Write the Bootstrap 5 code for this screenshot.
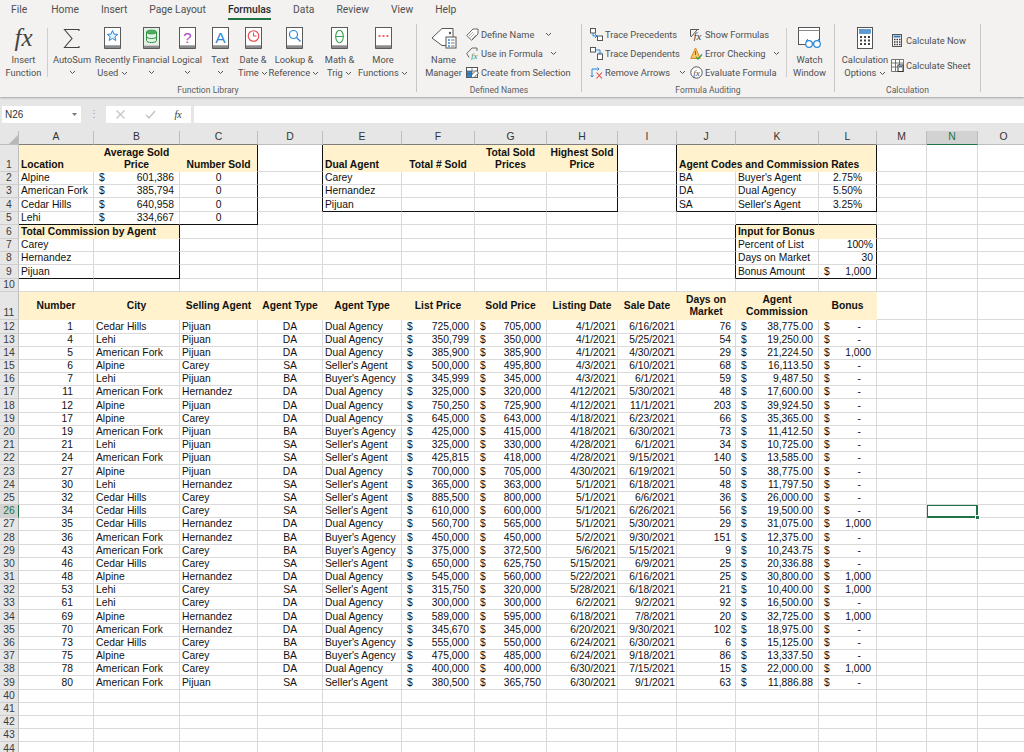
<!DOCTYPE html>
<html lang="en">
<head>
<meta charset="utf-8">
<title>Real Estate Workbook</title>
<link href="https://cdn.jsdelivr.net/npm/bootstrap@5.3.0/dist/css/bootstrap.min.css" rel="stylesheet">
<style>
html,body{margin:0;height:752px;overflow:hidden;background:#fff}
.rb{background:#f3f2f1;height:97px;font-family:Roboto,"Liberation Sans",sans-serif;color:#505050;box-shadow:0 1px 2px rgba(0,0,0,.28);position:relative;z-index:2}
.rb-tabs{height:20px;padding-left:11px;gap:22px;font-size:10.3px;line-height:20px}
.rb-tab{height:19px}
.rb-tab:first-child{margin-right:2px}
.rb-on{font-weight:500;color:#2a2a2a;border-bottom:2px solid #217346;height:19.5px}
.rb-body{height:77px}
.rb-grp{margin-top:4px;height:68px;border-right:1px solid #c9c7c5;flex:none}
.g-fn{width:417px}.g-dn{width:165px}.g-fa{width:253px}.g-ca{width:146px}
.rb-items{height:60px}
.rb-cap{height:12px;line-height:12px;font-size:8.6px;text-align:center;color:#5c5c5c}
.rb-btn{font-size:9.3px;line-height:13px;text-align:center;flex:none;display:flex;flex-direction:column;align-items:center;white-space:nowrap}
.rb-ic{height:22px;margin-top:3px;margin-bottom:3.5px;display:block;flex:none}
.rb-fx{font-family:"Liberation Serif",serif;font-style:italic;font-size:25px;line-height:22px;color:#444;padding:0 3px}
.rb-sep{width:1px;height:49px;margin-top:4px;background:#d0cecc;flex:none}
.b47{width:47px}.b44{width:44px;margin-left:2px}.b37{width:37px}.b40{width:40px}.b32{width:32px}.b34{width:34px}.b50{width:50px}.b41{width:41px}.b46{width:46px}
.b49{width:49px;margin-left:2px}.b45{width:45px}.b58{width:58px;margin-left:1px}
.rb-col{flex:none;padding-top:.5px;font-size:9.3px;white-space:nowrap}
.rb-row{height:19px;line-height:19px;display:flex;align-items:center;gap:2px}
.rb-row svg.si{flex:none}
.col-dn{margin-left:-2px}.col-a{margin-left:8px;width:100px}.col-b{width:96px}.col-c{margin-left:-3px;padding-top:6.5px}
.col-c .rb-row{margin-bottom:6px}
.chev{flex:none}
.ch-dn1{margin-left:9px}.ch-dn2{margin-left:5px}.ch-ra{margin-left:7px}.ch-ec{margin-left:5px}
.fbar{height:34px;background:#e6e6e6;padding-top:9px;font-family:"Liberation Sans",sans-serif}
.fb-box{background:#fff;height:17px;font-size:10px;line-height:17px;color:#333}
.fb-name{width:79px;margin-left:2px;padding-left:3px}
.fb-dots{width:25px;text-align:center;font-size:10px;line-height:16px;color:#9a9a9a;flex:none}
.fb-fx{width:85px;gap:0}
.fb-in{margin-left:3px;flex:1}
.fxi{font-family:"Liberation Serif",serif;font-style:italic}
.sheet-wrap{overflow:hidden;height:621px;position:relative}
.sheet{table-layout:fixed;width:1030px;border-collapse:separate;border-spacing:0;font-family:"Liberation Sans",Arial,sans-serif;font-size:10.3px;line-height:12px;color:#111}
.sheet th,.sheet td{padding:0 2px;border-right:1px solid #dadada;border-bottom:1px solid #dadada;vertical-align:bottom;white-space:nowrap;font-weight:400}
.sheet tr{height:13.2px}
.sheet .tops tr{height:13.42px}
.sheet thead th{background:#e6e6e6;height:13.5px;text-align:center;border-right-color:#bdbdbd;border-bottom-color:#bdbdbd;color:#333;font-size:10.4px;vertical-align:middle}
.sheet thead th.et{border-bottom-color:#7d7d7d}
.sheet tbody th{background:#e6e6e6;text-align:center;color:#3c3c3c;border-right-color:#bdbdbd;border-bottom-color:#cfcfcf;padding:0;font-size:10.4px}
.sheet thead th.hs{background:#d2d2d2;color:#217346;border-bottom:1px solid #217346}
.sheet tbody th.hs{background:#d2d2d2;color:#217346;border-right:1.5px solid #217346}
.sheet .tops .rh1{height:27px}.sheet .tops .rh11{height:28.2px}
.hd{background:#fff2cc;font-weight:700!important;border-right-color:#fff2cc!important;border-bottom-color:#fff2cc!important}
.hm{vertical-align:middle!important;text-align:center}
.cc{text-align:center}.re{text-align:right;padding-right:3px!important}
.mny{text-align:right;padding:0 5px!important}
.mny span{float:left}
.sheet td.er{border-right-color:#111!important}
.sheet td.eb{border-bottom-color:#111!important}
.data td:nth-child(2){text-align:right;padding-right:20px}
.data td:nth-child(5){text-align:center}
.data td:nth-child(7),.data td:nth-child(8),.data td:nth-child(12),.data td:nth-child(13){text-align:right;padding:0 5px}
.data td:nth-child(7) span,.data td:nth-child(8) span,.data td:nth-child(12) span,.data td:nth-child(13) span{float:left}
.data td:nth-child(9),.data td:nth-child(10){text-align:right;padding-right:1px}
.data td:nth-child(11){text-align:right;padding-right:4px}
.data td.dsh{padding-right:15px}
.note{position:relative}
.note-dot{position:absolute;right:6px;top:1px;width:2px;height:2px;background:#d11}
.sel{position:relative;box-shadow:inset 0 0 0 1px #217346;border-color:#217346!important}
.sel-h{position:absolute;right:-3px;bottom:-3px;width:5px;height:5px;background:#217346;border:1px solid #fff}
.sheet-corner{position:absolute;left:9px;top:4px}
</style>
</head>
<body>
<svg width="0" height="0" class="position-absolute">
<symbol id="book" viewBox="0 0 17 22"><rect x=".5" y=".5" width="16" height="18.5" fill="#fff" stroke="#5a5a5a"/><path d="M.5 19v2.5h16V19" fill="#8a8a8a" stroke="#5a5a5a"/></symbol>
</svg>
<div class="rb">
<div class="d-flex rb-tabs">
<div class="rb-tab">File</div><div class="rb-tab">Home</div><div class="rb-tab">Insert</div><div class="rb-tab">Page Layout</div><div class="rb-tab rb-on">Formulas</div><div class="rb-tab">Data</div><div class="rb-tab">Review</div><div class="rb-tab">View</div><div class="rb-tab">Help</div>
</div>
<div class="d-flex rb-body">

<div class="rb-grp g-fn">
<div class="d-flex rb-items">
<div class="rb-btn b47"><span class="rb-ic rb-fx">fx</span>Insert<br>Function</div>
<div class="rb-sep"></div>
<div class="rb-btn b44"><svg class="rb-ic" width="18" height="22" viewBox="0 0 18 22"><path d="M16 4V2.5H1.5L9 11.5 1.5 20.5H16V19" fill="none" stroke="#444" stroke-width="1.1"/></svg>AutoSum<svg class="chev mt-1" width="7" height="5" viewBox="0 0 7 5"><path d="M1 1l2.5 2.5L6 1" fill="none" stroke="#555"/></svg></div>
<div class="rb-btn b37"><svg class="rb-ic" width="17" height="22"><use href="#book"/><path d="M8.5 3.5l1.5 3.6 3.8.3-2.9 2.4.9 3.7-3.3-2-3.3 2 .9-3.7-2.9-2.4 3.8-.3z" fill="#e5f1fb" stroke="#2b88d8"/></svg><span>Recently<br>Used <svg class="chev" width="7" height="5" viewBox="0 0 7 5"><path d="M1 1l2.5 2.5L6 1" fill="none" stroke="#555"/></svg></span></div>
<div class="rb-btn b40"><svg class="rb-ic" width="17" height="22"><use href="#book"/><path d="M1 1h15v17.500H1z" fill="#e3f1e5"/><ellipse cx="8.500" cy="5" rx="5" ry="2" fill="#4fae62" stroke="#2f8f45" stroke-width=".7"/><path d="M3.500 5v8.500c0 2.700 10 2.700 10 0V5M3.500 9.500c0 2.700 10 2.700 10 0" fill="none" stroke="#2f8f45"/></svg>Financial<svg class="chev mt-1" width="7" height="5" viewBox="0 0 7 5"><path d="M1 1l2.5 2.5L6 1" fill="none" stroke="#555"/></svg></div>
<div class="rb-btn b32"><svg class="rb-ic" width="17" height="22"><use href="#book"/><text x="8.500" y="15.500" text-anchor="middle" font-family="Liberation Sans" font-size="15" fill="#b146c2">?</text></svg>Logical<svg class="chev mt-1" width="7" height="5" viewBox="0 0 7 5"><path d="M1 1l2.500 2.500L6 1" fill="none" stroke="#555"/></svg></div>
<div class="rb-btn b34"><svg class="rb-ic" width="17" height="22"><use href="#book"/><text x="8.500" y="15.500" text-anchor="middle" font-family="Liberation Sans" font-size="15.500" fill="#2b88d8">A</text></svg>Text<svg class="chev mt-1" width="7" height="5" viewBox="0 0 7 5"><path d="M1 1l2.500 2.500L6 1" fill="none" stroke="#555"/></svg></div>
<div class="rb-btn b32"><svg class="rb-ic" width="17" height="22"><use href="#book"/><circle cx="8.500" cy="9" r="5.300" fill="#fff" stroke="#e8464a" stroke-width="1.100"/><path d="M8.500 5.500V9H11.500" fill="none" stroke="#e8464a"/></svg><span>Date &amp;<br>Time <svg class="chev" width="7" height="5" viewBox="0 0 7 5"><path d="M1 1l2.500 2.500L6 1" fill="none" stroke="#555"/></svg></span></div>
<div class="rb-btn b50"><svg class="rb-ic" width="17" height="22"><use href="#book"/><circle cx="7.500" cy="7.500" r="4" fill="none" stroke="#2b88d8" stroke-width="1.200"/><path d="M10.500 10.500l4 4" stroke="#2b88d8" stroke-width="1.300"/></svg><span>Lookup &amp;<br>Reference <svg class="chev" width="7" height="5" viewBox="0 0 7 5"><path d="M1 1l2.500 2.500L6 1" fill="none" stroke="#555"/></svg></span></div>
<div class="rb-btn b41"><svg class="rb-ic" width="17" height="22"><use href="#book"/><ellipse cx="8.500" cy="9.500" rx="3.800" ry="6.200" fill="none" stroke="#38a34f" stroke-width="1.100"/><path d="M4.700 9.500h7.600" stroke="#38a34f"/></svg><span>Math &amp;<br>Trig <svg class="chev" width="7" height="5" viewBox="0 0 7 5"><path d="M1 1l2.500 2.500L6 1" fill="none" stroke="#555"/></svg></span></div>
<div class="rb-btn b46"><svg class="rb-ic" width="17" height="22"><use href="#book"/><path d="M3.500 9h2M7.500 9h2M11.500 9h2" stroke="#e8363a" stroke-width="1.500"/></svg><span>More<br>Functions <svg class="chev" width="7" height="5" viewBox="0 0 7 5"><path d="M1 1l2.500 2.500L6 1" fill="none" stroke="#555"/></svg></span></div>
</div>
<div class="rb-cap">Function Library</div>
</div>

<div class="rb-grp g-dn">
<div class="d-flex rb-items">
<div class="rb-btn b49"><svg class="rb-ic" width="26" height="22" viewBox="0 0 26 22"><path d="M1 11L11 1.500h11v17H11z" fill="#fff" stroke="#555"/><circle cx="19" cy="6" r="1.200" fill="#555"/><rect x="15" y="10" width="10" height="11" fill="#fff" stroke="#555"/><path d="M17 13h2M17 16h2M17 19h2" stroke="#2b88d8" stroke-width="1.500"/><path d="M20 13h3.500M20 16h3.500M20 19h3.500" stroke="#777"/></svg>Name<br>Manager</div>
<div class="rb-col col-dn">
<div class="rb-row"><svg class="si" width="13" height="13" viewBox="0 0 13 13"><path d="M.7 7.500L7 1h5v5l-6.300 6.300z" fill="#fff" stroke="#666"/><path d="M3 8l4-4M4.500 9.500l4-4M6 11l4-4" stroke="#999" stroke-width=".8"/></svg>Define Name<svg class="chev ch-dn1" width="7" height="5" viewBox="0 0 7 5"><path d="M1 1l2.500 2.500L6 1" fill="none" stroke="#555"/></svg></div>
<div class="rb-row"><svg class="si" width="13" height="13" viewBox="0 0 13 13"><path d="M.7 6.500L6 1h5v3M3 10.500L.7 6.500" fill="none" stroke="#666"/><text x="5" y="12" font-family="Liberation Serif" font-style="italic" font-size="9" fill="#3b8f4e">fx</text></svg>Use in Formula<svg class="chev ch-dn2" width="7" height="5" viewBox="0 0 7 5"><path d="M1 1l2.500 2.500L6 1" fill="none" stroke="#555"/></svg></div>
<div class="rb-row"><svg class="si" width="13" height="13" viewBox="0 0 13 13"><rect x=".5" y="1.500" width="11" height="10" fill="#fff" stroke="#555"/><path d="M1 5h5v6H1z" fill="#2b88d8"/><path d="M.5 5h11M.5 8h11M6 1.500v10" stroke="#555" stroke-width=".7"/><path d="M5.500 9L10 4.500l2.500 2.500L8 11.500H5.500z" fill="#fff" stroke="#666"/></svg>Create from Selection</div>
</div>
</div>
<div class="rb-cap">Defined Names</div>
</div>

<div class="rb-grp g-fa">
<div class="d-flex rb-items">
<div class="rb-col col-a">
<div class="rb-row"><svg class="si" width="13" height="13" viewBox="0 0 13 13"><rect x=".5" y=".5" width="5" height="4.500" fill="#fff" stroke="#555"/><rect x="7.500" y="8" width="5" height="4.500" fill="#fff" stroke="#555"/><path d="M3 5v3h3.500M5 6l2 2-2 2" fill="none" stroke="#2b88d8"/></svg>Trace Precedents</div>
<div class="rb-row"><svg class="si" width="13" height="13" viewBox="0 0 13 13"><rect x=".5" y=".5" width="5" height="4.500" fill="#fff" stroke="#555"/><rect x="7.500" y="7" width="5" height="5.500" fill="#fff" stroke="#555"/><path d="M5.500 3H10v4M8.500 5.500L10 7l1.500-1.500" fill="none" stroke="#2b88d8"/></svg>Trace Dependents</div>
<div class="rb-row"><svg class="si" width="13" height="13" viewBox="0 0 13 13"><path d="M2 11V3h7M7.500 1.500L9 3 7.500 4.500M.5 9.500L2 11l1.500-1.500" fill="none" stroke="#2b88d8"/><path d="M6.500 6.500l5.500 6M12 6.500l-5.500 6" stroke="#e8464a" stroke-width="1.100"/></svg>Remove Arrows<svg class="chev ch-ra" width="7" height="5" viewBox="0 0 7 5"><path d="M1 1l2.500 2.500L6 1" fill="none" stroke="#555"/></svg></div>
</div>
<div class="rb-col col-b">
<div class="rb-row"><svg class="si" width="13" height="13" viewBox="0 0 13 13"><path d="M.5 1.500h8.500M.5 1.500v7M1 9l6-7" fill="none" stroke="#555"/><text x="3.500" y="12" font-family="Liberation Serif" font-style="italic" font-size="11" fill="#444">fx</text></svg>Show Formulas</div>
<div class="rb-row"><svg class="si" width="13" height="13" viewBox="0 0 13 13"><path d="M5.500 1L.7 11.500h9.600z" fill="#f6c667" stroke="#e08a1e"/><path d="M5.500 4v4" stroke="#c24e1a"/><path d="M6 10l2 2 4-4.500" fill="none" stroke="#38a34f" stroke-width="1.300"/></svg>Error Checking<svg class="chev ch-ec" width="7" height="5" viewBox="0 0 7 5"><path d="M1 1l2.500 2.500L6 1" fill="none" stroke="#555"/></svg></div>
<div class="rb-row"><svg class="si" width="13" height="13" viewBox="0 0 13 13"><circle cx="6.500" cy="6.500" r="5.700" fill="#fff" stroke="#555"/><text x="3.200" y="9.500" font-family="Liberation Serif" font-style="italic" font-size="9" fill="#444">fx</text></svg>Evaluate Formula</div>
</div>
<div class="rb-sep"></div>
<div class="rb-btn b45"><svg class="rb-ic" width="24" height="22" viewBox="0 0 24 22"><rect x=".5" y=".5" width="21" height="17" fill="#fff" stroke="#555"/><path d="M.5 3.500h21" stroke="#888"/><circle cx="11" cy="17" r="3.300" fill="#fff" stroke="#2b88d8" stroke-width="1.200"/><circle cx="19" cy="17" r="3.300" fill="#fff" stroke="#2b88d8" stroke-width="1.200"/><path d="M14 16h2M8 14l2-2M22 14l-2-2" stroke="#2b88d8"/></svg>Watch<br>Window</div>
</div>
<div class="rb-cap">Formula Auditing</div>
</div>

<div class="rb-grp g-ca">
<div class="d-flex rb-items">
<div class="rb-btn b58"><svg class="rb-ic" width="16" height="22" viewBox="0 0 16 22"><rect x=".5" y=".5" width="15" height="21" fill="#fff" stroke="#555"/><rect x="2.500" y="2.500" width="11" height="4" fill="#5b9bd5" stroke="#3a7ab5" stroke-width=".6"/><path d="M3 10h2M7 10h2M11 10h2M3 13.500h2M7 13.500h2M11 13.500h2M3 17h2M7 17h2M11 17h2" stroke="#444" stroke-width="2"/></svg><span>Calculation<br>Options <svg class="chev" width="7" height="5" viewBox="0 0 7 5"><path d="M1 1l2.500 2.500L6 1" fill="none" stroke="#555"/></svg></span></div>
<div class="rb-col col-c">
<div class="rb-row"><svg class="si" width="13" height="13" viewBox="0 0 13 13"><rect x="1.500" y=".5" width="9" height="12" fill="#fff" stroke="#555"/><rect x="2.500" y="1.500" width="7" height="2" fill="#3a7ab5"/><path d="M3 5.500h1.500M5.500 5.500H7M8 5.500h1.500M3 8h1.500M5.500 8H7M8 8h1.500M3 10.500h1.500M5.500 10.500H7M8 10.500h1.500" stroke="#333" stroke-width="1.300"/></svg>Calculate Now</div>
<div class="rb-row"><svg class="si" width="13" height="13" viewBox="0 0 13 13"><path d="M.5.500h12v12H.5zM.5 4h12M.5 8h12M4.500.5v12M8.500.5v12" fill="#fff" stroke="#666" stroke-width=".9"/><rect x="7" y="6" width="5" height="6.500" fill="#fff" stroke="#333"/><rect x="8" y="7" width="3" height="1.500" fill="#3a7ab5"/></svg>Calculate Sheet</div>
</div>
</div>
<div class="rb-cap">Calculation</div>
</div>

</div>
</div>

<div class="fbar d-flex">
<div class="fb-box fb-name d-flex justify-content-between align-items-center"><span>N26</span><svg class="me-1" width="5" height="3" viewBox="0 0 5 3"><path d="M0 0h5L2.500 3z" fill="#777"/></svg></div>
<div class="fb-dots">⋮</div>
<div class="fb-box fb-fx d-flex align-items-center justify-content-around">
<svg width="11" height="11" viewBox="0 0 11 11"><path d="M1.500 1.500l8 8M9.500 1.500l-8 8" stroke="#c4c4c4" stroke-width="1.200"/></svg>
<svg width="11" height="11" viewBox="0 0 11 11"><path d="M1 6l3 3 6-7" fill="none" stroke="#c4c4c4" stroke-width="1.500"/></svg>
<span class="fxi">fx</span>
</div>
<div class="fb-box fb-in"></div>
</div>

<div class="sheet-wrap">
<svg class="sheet-corner" width="9" height="9" viewBox="0 0 9 9"><path d="M9 0v9H0z" fill="#b8b8b8"/></svg>
<table class="sheet">
<colgroup><col style="width:19px"><col style="width:75px"><col style="width:86px"><col style="width:78px"><col style="width:65px"><col style="width:79px"><col style="width:73px"><col style="width:72px"><col style="width:71px"><col style="width:59px"><col style="width:59px"><col style="width:83px"><col style="width:58px"><col style="width:50px"><col style="width:51px"><col style="width:52px"></colgroup>
<thead><tr><th></th><th class="et">A</th><th class="et">B</th><th class="et">C</th><th>D</th><th class="et">E</th><th class="et">F</th><th class="et">G</th><th class="et">H</th><th>I</th><th class="et">J</th><th class="et">K</th><th class="et">L</th><th>M</th><th class="hs">N</th><th>O</th></tr></thead>
<tbody class="tops">
<tr class="rh1"><th>1</th><td class="hd">Location</td><td class="hd cc">Average Sold<br>Price</td><td class="hd cc er">Number Sold</td><td class="er"></td><td class="hd">Dual Agent</td><td class="hd cc">Total # Sold</td><td class="hd cc">Total Sold<br>Prices</td><td class="hd cc er">Highest Sold<br>Price</td><td class="er"></td><td class="hd er" colspan="3">Agent Codes and Commission Rates</td><td></td><td></td><td></td></tr>
<tr><th>2</th><td>Alpine</td><td class="mny"><span>$</span>601,386</td><td class="cc er">0</td><td class="er"></td><td>Carey</td><td></td><td></td><td class="er"></td><td class="er"></td><td>BA</td><td>Buyer's Agent</td><td class="cc er">2.75%</td><td></td><td></td><td></td></tr>
<tr><th>3</th><td>American Fork</td><td class="mny"><span>$</span>385,794</td><td class="cc er">0</td><td class="er"></td><td>Hernandez</td><td></td><td></td><td class="er"></td><td class="er"></td><td>DA</td><td>Dual Agency</td><td class="cc er">5.50%</td><td></td><td></td><td></td></tr>
<tr><th>4</th><td>Cedar Hills</td><td class="mny"><span>$</span>640,958</td><td class="cc er">0</td><td class="er"></td><td class="eb">Pijuan</td><td class="eb"></td><td class="eb"></td><td class="eb er"></td><td class="er"></td><td class="eb">SA</td><td class="eb">Seller's Agent</td><td class="cc eb er">3.25%</td><td></td><td></td><td></td></tr>
<tr><th>5</th><td class="eb">Lehi</td><td class="mny eb"><span>$</span>334,667</td><td class="cc eb er">0</td><td></td><td></td><td></td><td></td><td></td><td></td><td></td><td class="eb"></td><td class="eb"></td><td></td><td></td><td></td></tr>
<tr><th>6</th><td class="hd er" colspan="2">Total Commission by Agent</td><td></td><td></td><td></td><td></td><td></td><td></td><td></td><td class="er"></td><td class="hd er" colspan="2">Input for Bonus</td><td></td><td></td><td></td></tr>
<tr><th>7</th><td>Carey</td><td class="er"></td><td></td><td></td><td></td><td></td><td></td><td></td><td></td><td class="er"></td><td>Percent of List</td><td class="re er">100%</td><td></td><td></td><td></td></tr>
<tr><th>8</th><td>Hernandez</td><td class="er"></td><td></td><td></td><td></td><td></td><td></td><td></td><td></td><td class="er"></td><td>Days on Market</td><td class="re er">30</td><td></td><td></td><td></td></tr>
<tr><th>9</th><td class="eb">Pijuan</td><td class="eb er"></td><td></td><td></td><td></td><td></td><td></td><td></td><td></td><td class="er"></td><td class="eb">Bonus Amount</td><td class="mny eb er"><span>$</span>1,000</td><td></td><td></td><td></td></tr>
<tr><th>10</th><td></td><td></td><td></td><td></td><td></td><td></td><td></td><td></td><td></td><td></td><td></td><td></td><td></td><td></td><td></td></tr>
<tr class="rh11"><th>11</th><td class="hd hm">Number</td><td class="hd hm">City</td><td class="hd hm">Selling Agent</td><td class="hd hm">Agent Type</td><td class="hd hm">Agent Type</td><td class="hd hm">List Price</td><td class="hd hm">Sold Price</td><td class="hd hm">Listing Date</td><td class="hd hm">Sale Date</td><td class="hd hm">Days on<br>Market</td><td class="hd hm">Agent<br>Commission</td><td class="hd hm">Bonus</td><td></td><td></td><td></td></tr>
</tbody>
<tbody class="data">
<tr><th>12</th><td>1</td><td>Cedar Hills</td><td>Pijuan</td><td>DA</td><td>Dual Agency</td><td><span>$</span>725,000</td><td><span>$</span>705,000</td><td>4/1/2021</td><td>6/16/2021</td><td>76</td><td><span>$</span>38,775.00</td><td class="dsh"><span>$</span>-</td><td></td><td></td><td></td></tr>
<tr><th>13</th><td>4</td><td>Lehi</td><td>Pijuan</td><td>DA</td><td>Dual Agency</td><td><span>$</span>350,799</td><td><span>$</span>350,000</td><td>4/1/2021</td><td>5/25/2021</td><td>54</td><td><span>$</span>19,250.00</td><td class="dsh"><span>$</span>-</td><td></td><td></td><td></td></tr>
<tr><th>14</th><td>5</td><td>American Fork</td><td>Pijuan</td><td>DA</td><td>Dual Agency</td><td><span>$</span>385,900</td><td><span>$</span>385,900</td><td>4/1/2021</td><td class="note">4/30/2021<i class="note-dot"></i></td><td>29</td><td><span>$</span>21,224.50</td><td><span>$</span>1,000</td><td></td><td></td><td></td></tr>
<tr><th>15</th><td>6</td><td>Alpine</td><td>Carey</td><td>SA</td><td>Seller's Agent</td><td><span>$</span>500,000</td><td><span>$</span>495,800</td><td>4/3/2021</td><td>6/10/2021</td><td>68</td><td><span>$</span>16,113.50</td><td class="dsh"><span>$</span>-</td><td></td><td></td><td></td></tr>
<tr><th>16</th><td>7</td><td>Lehi</td><td>Pijuan</td><td>BA</td><td>Buyer's Agency</td><td><span>$</span>345,999</td><td><span>$</span>345,000</td><td>4/3/2021</td><td>6/1/2021</td><td>59</td><td><span>$</span>9,487.50</td><td class="dsh"><span>$</span>-</td><td></td><td></td><td></td></tr>
<tr><th>17</th><td>11</td><td>American Fork</td><td>Hernandez</td><td>DA</td><td>Dual Agency</td><td><span>$</span>325,000</td><td><span>$</span>320,000</td><td>4/12/2021</td><td>5/30/2021</td><td>48</td><td><span>$</span>17,600.00</td><td class="dsh"><span>$</span>-</td><td></td><td></td><td></td></tr>
<tr><th>18</th><td>12</td><td>Alpine</td><td>Pijuan</td><td>DA</td><td>Dual Agency</td><td><span>$</span>750,250</td><td><span>$</span>725,900</td><td>4/12/2021</td><td>11/1/2021</td><td>203</td><td><span>$</span>39,924.50</td><td class="dsh"><span>$</span>-</td><td></td><td></td><td></td></tr>
<tr><th>19</th><td>17</td><td>Alpine</td><td>Carey</td><td>DA</td><td>Dual Agency</td><td><span>$</span>645,000</td><td><span>$</span>643,000</td><td>4/18/2021</td><td>6/23/2021</td><td>66</td><td><span>$</span>35,365.00</td><td class="dsh"><span>$</span>-</td><td></td><td></td><td></td></tr>
<tr><th>20</th><td>19</td><td>American Fork</td><td>Pijuan</td><td>BA</td><td>Buyer's Agency</td><td><span>$</span>425,000</td><td><span>$</span>415,000</td><td>4/18/2021</td><td>6/30/2021</td><td>73</td><td><span>$</span>11,412.50</td><td class="dsh"><span>$</span>-</td><td></td><td></td><td></td></tr>
<tr><th>21</th><td>21</td><td>Lehi</td><td>Pijuan</td><td>SA</td><td>Seller's Agent</td><td><span>$</span>325,000</td><td><span>$</span>330,000</td><td>4/28/2021</td><td>6/1/2021</td><td>34</td><td><span>$</span>10,725.00</td><td class="dsh"><span>$</span>-</td><td></td><td></td><td></td></tr>
<tr><th>22</th><td>24</td><td>American Fork</td><td>Pijuan</td><td>SA</td><td>Seller's Agent</td><td><span>$</span>425,815</td><td><span>$</span>418,000</td><td>4/28/2021</td><td>9/15/2021</td><td>140</td><td><span>$</span>13,585.00</td><td class="dsh"><span>$</span>-</td><td></td><td></td><td></td></tr>
<tr><th>23</th><td>27</td><td>Alpine</td><td>Pijuan</td><td>DA</td><td>Dual Agency</td><td><span>$</span>700,000</td><td><span>$</span>705,000</td><td>4/30/2021</td><td>6/19/2021</td><td>50</td><td><span>$</span>38,775.00</td><td class="dsh"><span>$</span>-</td><td></td><td></td><td></td></tr>
<tr><th>24</th><td>30</td><td>Lehi</td><td>Hernandez</td><td>SA</td><td>Seller's Agent</td><td><span>$</span>365,000</td><td><span>$</span>363,000</td><td>5/1/2021</td><td>6/18/2021</td><td>48</td><td><span>$</span>11,797.50</td><td class="dsh"><span>$</span>-</td><td></td><td></td><td></td></tr>
<tr><th>25</th><td>32</td><td>Cedar Hills</td><td>Carey</td><td>SA</td><td>Seller's Agent</td><td><span>$</span>885,500</td><td><span>$</span>800,000</td><td>5/1/2021</td><td>6/6/2021</td><td>36</td><td><span>$</span>26,000.00</td><td class="dsh"><span>$</span>-</td><td></td><td></td><td></td></tr>
<tr><th class="hs">26</th><td>34</td><td>Cedar Hills</td><td>Carey</td><td>SA</td><td>Seller's Agent</td><td><span>$</span>610,000</td><td><span>$</span>600,000</td><td>5/1/2021</td><td>6/26/2021</td><td>56</td><td><span>$</span>19,500.00</td><td class="dsh"><span>$</span>-</td><td></td><td class="sel"><i class="sel-h"></i></td><td></td></tr>
<tr><th>27</th><td>35</td><td>Cedar Hills</td><td>Hernandez</td><td>DA</td><td>Dual Agency</td><td><span>$</span>560,700</td><td><span>$</span>565,000</td><td>5/1/2021</td><td>5/30/2021</td><td>29</td><td><span>$</span>31,075.00</td><td><span>$</span>1,000</td><td></td><td></td><td></td></tr>
<tr><th>28</th><td>36</td><td>American Fork</td><td>Hernandez</td><td>BA</td><td>Buyer's Agency</td><td><span>$</span>450,000</td><td><span>$</span>450,000</td><td>5/2/2021</td><td>9/30/2021</td><td>151</td><td><span>$</span>12,375.00</td><td class="dsh"><span>$</span>-</td><td></td><td></td><td></td></tr>
<tr><th>29</th><td>43</td><td>American Fork</td><td>Carey</td><td>BA</td><td>Buyer's Agency</td><td><span>$</span>375,000</td><td><span>$</span>372,500</td><td>5/6/2021</td><td>5/15/2021</td><td>9</td><td><span>$</span>10,243.75</td><td class="dsh"><span>$</span>-</td><td></td><td></td><td></td></tr>
<tr><th>30</th><td>46</td><td>Cedar Hills</td><td>Carey</td><td>SA</td><td>Seller's Agent</td><td><span>$</span>650,000</td><td><span>$</span>625,750</td><td>5/15/2021</td><td>6/9/2021</td><td>25</td><td><span>$</span>20,336.88</td><td class="dsh"><span>$</span>-</td><td></td><td></td><td></td></tr>
<tr><th>31</th><td>48</td><td>Alpine</td><td>Hernandez</td><td>DA</td><td>Dual Agency</td><td><span>$</span>545,000</td><td><span>$</span>560,000</td><td>5/22/2021</td><td>6/16/2021</td><td>25</td><td><span>$</span>30,800.00</td><td><span>$</span>1,000</td><td></td><td></td><td></td></tr>
<tr><th>32</th><td>53</td><td>Lehi</td><td>Carey</td><td>SA</td><td>Seller's Agent</td><td><span>$</span>315,750</td><td><span>$</span>320,000</td><td>5/28/2021</td><td>6/18/2021</td><td>21</td><td><span>$</span>10,400.00</td><td><span>$</span>1,000</td><td></td><td></td><td></td></tr>
<tr><th>33</th><td>61</td><td>Lehi</td><td>Carey</td><td>DA</td><td>Dual Agency</td><td><span>$</span>300,000</td><td><span>$</span>300,000</td><td>6/2/2021</td><td>9/2/2021</td><td>92</td><td><span>$</span>16,500.00</td><td class="dsh"><span>$</span>-</td><td></td><td></td><td></td></tr>
<tr><th>34</th><td>69</td><td>Alpine</td><td>Hernandez</td><td>DA</td><td>Dual Agency</td><td><span>$</span>589,000</td><td><span>$</span>595,000</td><td>6/18/2021</td><td>7/8/2021</td><td>20</td><td><span>$</span>32,725.00</td><td><span>$</span>1,000</td><td></td><td></td><td></td></tr>
<tr><th>35</th><td>70</td><td>American Fork</td><td>Hernandez</td><td>DA</td><td>Dual Agency</td><td><span>$</span>345,670</td><td><span>$</span>345,000</td><td>6/20/2021</td><td>9/30/2021</td><td>102</td><td><span>$</span>18,975.00</td><td class="dsh"><span>$</span>-</td><td></td><td></td><td></td></tr>
<tr><th>36</th><td>73</td><td>Cedar Hills</td><td>Carey</td><td>BA</td><td>Buyer's Agency</td><td><span>$</span>555,000</td><td><span>$</span>550,000</td><td>6/24/2021</td><td>6/30/2021</td><td>6</td><td><span>$</span>15,125.00</td><td class="dsh"><span>$</span>-</td><td></td><td></td><td></td></tr>
<tr><th>37</th><td>75</td><td>Alpine</td><td>Carey</td><td>BA</td><td>Buyer's Agency</td><td><span>$</span>475,000</td><td><span>$</span>485,000</td><td>6/24/2021</td><td>9/18/2021</td><td>86</td><td><span>$</span>13,337.50</td><td class="dsh"><span>$</span>-</td><td></td><td></td><td></td></tr>
<tr><th>38</th><td>78</td><td>American Fork</td><td>Carey</td><td>DA</td><td>Dual Agency</td><td><span>$</span>400,000</td><td><span>$</span>400,000</td><td>6/30/2021</td><td>7/15/2021</td><td>15</td><td><span>$</span>22,000.00</td><td><span>$</span>1,000</td><td></td><td></td><td></td></tr>
<tr><th>39</th><td>80</td><td>American Fork</td><td>Pijuan</td><td>SA</td><td>Seller's Agent</td><td><span>$</span>380,500</td><td><span>$</span>365,750</td><td>6/30/2021</td><td>9/1/2021</td><td>63</td><td><span>$</span>11,886.88</td><td class="dsh"><span>$</span>-</td><td></td><td></td><td></td></tr>
<tr><th>40</th><td></td><td></td><td></td><td></td><td></td><td></td><td></td><td></td><td></td><td></td><td></td><td></td><td></td><td></td><td></td></tr>
<tr><th>41</th><td></td><td></td><td></td><td></td><td></td><td></td><td></td><td></td><td></td><td></td><td></td><td></td><td></td><td></td><td></td></tr>
<tr><th>42</th><td></td><td></td><td></td><td></td><td></td><td></td><td></td><td></td><td></td><td></td><td></td><td></td><td></td><td></td><td></td></tr>
<tr><th>43</th><td></td><td></td><td></td><td></td><td></td><td></td><td></td><td></td><td></td><td></td><td></td><td></td><td></td><td></td><td></td></tr>
<tr><th>44</th><td></td><td></td><td></td><td></td><td></td><td></td><td></td><td></td><td></td><td></td><td></td><td></td><td></td><td></td><td></td></tr>
</tbody>
</table>
</div>
<script src="https://cdn.jsdelivr.net/npm/bootstrap@5.3.0/dist/js/bootstrap.bundle.min.js"></script>
</body>
</html>
